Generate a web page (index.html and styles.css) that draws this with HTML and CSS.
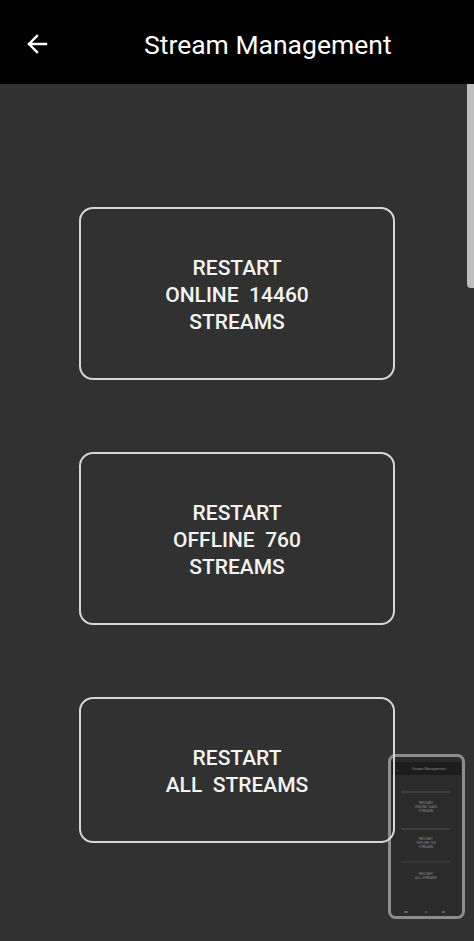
FILE: index.html
```html
<!DOCTYPE html>
<html lang="en">
<head>
  <meta charset="UTF-8" />
  <meta name="viewport" content="width=device-width, initial-scale=1.0"/>
  <title>Stream Management</title>
  <link rel="stylesheet" href="styles.css">
</head>
<body>

  <header class="appbar">
    <button class="back" aria-label="Back">
      <svg width="22" height="22" viewBox="0 0 22 22">
        <path d="M20 11H3M11 3l-8 8 8 8" fill="none" stroke="#fff" stroke-width="2.4" stroke-linecap="square"/>
      </svg>
    </button>
    <h1 class="title">Stream Management</h1>
  </header>

  <main class="content">
    <div class="actions">
      <button class="action">RESTART<br>ONLINE&nbsp; 14460<br>STREAMS</button>
      <button class="action">RESTART<br>OFFLINE&nbsp; 760<br>STREAMS</button>
      <button class="action">RESTART<br>ALL&nbsp; STREAMS</button>
    </div>
  </main>

  <div class="scroll-thumb"></div>

  <div class="preview">
    <svg width="77" height="165" viewBox="0 0 77 165">
      <rect x="1.5" y="1.5" width="74" height="162" rx="6" fill="#2b2b2b" stroke="#8c8c8c" stroke-width="3"/>
      <rect x="4" y="8" width="69" height="13" fill="#1d1d1d"/>
      <text x="7" y="16.5" font-size="5" fill="#777" font-family="Roboto, sans-serif">&#8592;</text>
      <text x="24" y="16" font-size="3.6" fill="#888" font-family="Roboto, sans-serif">Stream Management</text>
      <line x1="13" y1="38" x2="62" y2="38" stroke="#555" stroke-width="1"/>
      <line x1="13" y1="75" x2="62" y2="75" stroke="#555" stroke-width="1"/>
      <line x1="13" y1="108" x2="62" y2="108" stroke="#444" stroke-width="1"/>
      <g font-size="3.4" fill="#8a8a8a" font-family="Roboto, sans-serif" text-anchor="middle">
        <text x="38" y="50">RESTART</text>
        <text x="38" y="54">ONLINE 14460</text>
        <text x="38" y="58">STREAMS</text>
        <text x="38" y="86">RESTART</text>
        <text x="38" y="90">OFFLINE 760</text>
        <text x="38" y="94">STREAMS</text>
        <text x="38" y="121">RESTART</text>
        <text x="38" y="125">ALL STREAMS</text>
      </g>
      <g fill="#666">
        <rect x="16" y="157" width="4" height="2"/>
        <circle cx="38" cy="158" r="1"/>
        <rect x="54" y="157" width="3" height="2"/>
      </g>
    </svg>
  </div>

</body>
</html>
```

FILE: styles.css
```css
html, body {
  margin: 0;
  height: 941px;
  overflow: hidden;
}

body {
  font-family: Roboto, "Noto Sans", sans-serif;
  background-color: #313131;
  color: #f2f2f2;
}

.appbar {
  box-sizing: border-box;
  height: 84px;
  background-color: #000;
  display: flex;
  align-items: center;
  padding: 4px 0 0 26px;
}

.back {
  width: 22px;
  height: 22px;
  padding: 0;
  border: none;
  background: none;
  display: flex;
  cursor: pointer;
}

.title {
  margin: 0 0 0 96px;
  font-size: 26.5px;
  font-weight: 400;
  color: #fff;
}

.content {
  padding-top: 123px;
}

.actions {
  display: flex;
  flex-direction: column;
  align-items: center;
  gap: 72px;
}

.action {
  position: relative;
  z-index: 2;
  width: 316px;
  padding: 46px 0 42px;
  border: 2px solid #d6d6d6;
  border-radius: 14px;
  background: transparent;
  color: #f4f4f4;
  font-family: Roboto, "Noto Sans", sans-serif;
  font-size: 21px;
  font-weight: 500;
  line-height: 27px;
  cursor: pointer;
}

.scroll-thumb {
  position: absolute;
  top: 84px;
  right: 0;
  width: 7px;
  height: 204px;
  background-color: #bdbdbd;
  border-bottom-left-radius: 4px;
}

.preview {
  position: absolute;
  left: 388px;
  top: 754px;
  z-index: 1;
  display: flex;
}
```
